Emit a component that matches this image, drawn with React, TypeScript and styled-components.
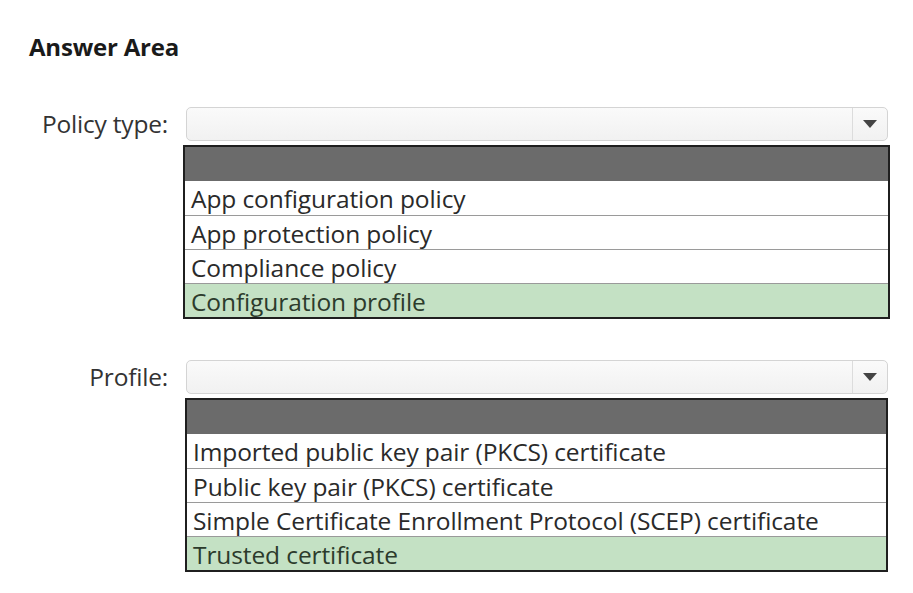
import * as React from 'react';
import styled, { createGlobalStyle } from 'styled-components';

const GlobalStyle = createGlobalStyle`
    html, body {
        margin: 0;
        padding: 0;
        background: #ffffff;
    }
    body {
        font-family: 'Open Sans', 'Noto Sans', sans-serif;
        color: #333333;
    }
`

const Root = styled.div`
    width: 913px;
    height: 593px;
    padding-top: 31px;
    box-sizing: border-box;
`

const Title = styled.h2`
    margin: 0 0 44px 29px;
    font-size: 24px;
    font-weight: 700;
    color: #1a1a1a;
    line-height: 32px;
    letter-spacing: -0.2px;
`

const Field = styled.div`
    display: grid;
    grid-template-columns: 168px 702px;
    column-gap: 18px;
    align-items: start;
    margin-bottom: ${(props: { gapAfter: number }) => props.gapAfter}px;
`

const Label = styled.div`
    grid-column: 1;
    text-align: right;
    font-size: 24.5px;
    line-height: 34px;
    color: #333333;
    letter-spacing: -0.2px;
`

const Select = styled.div`
    grid-column: 2;
    display: flex;
    height: 34px;
    box-sizing: border-box;
    border: 1px solid #d4d4d4;
    border-radius: 5px;
    background: linear-gradient(#fafafa, #f1f1f1);
`

const SelectBody = styled.div`
    flex: 1;
`

const ArrowButton = styled.div`
    width: 34px;
    border-left: 1px solid #dcdcdc;
    display: flex;
    align-items: center;
    justify-content: center;
`

const ListBox = styled.div`
    grid-column: 2;
    margin-top: 4px;
    margin-left: ${(props: { shift: number }) => props.shift}px;
    margin-right: ${(props: { shift: number }) => props.shift + 1}px;
    border: 2px solid #1f1f1f;
    background: #ffffff;
`

const ListHeader = styled.div`
    height: 34px;
    background: #6b6b6b;
`

const Option = styled.div`
    height: 34px;
    box-sizing: border-box;
    padding: 2px 0 0 6px;
    font-size: 24.5px;
    line-height: 32px;
    letter-spacing: -0.1px;
    white-space: nowrap;
    color: ${(props: { selected?: boolean }) => props.selected ? '#2c3b2c' : '#2a2a2a'};
    background: ${(props: { selected?: boolean }) => props.selected ? '#c4e1c4' : '#ffffff'};
    border-top: 1px solid #9a9a9a;

    &:first-of-type {
        border-top: none;
    }
`

const Arrow = () => (
    <svg width="14" height="8" viewBox="0 0 14 8">
        <path d="M0 0 L14 0 L7 8 Z" fill="#444444" />
    </svg>
)

type DropdownProps = {
    label: string,
    options: Array<string>,
    selected: number,
    gapAfter: number,
    shift: number,
}

const Dropdown = ({ label, options, selected, gapAfter, shift }: DropdownProps) => (
    <Field gapAfter={gapAfter}>
        <Label>{label}</Label>
        <Select>
            <SelectBody />
            <ArrowButton><Arrow /></ArrowButton>
        </Select>
        <div />
        <ListBox shift={shift}>
            <ListHeader />
            <div>
                {options.map((o, i) => (
                    <Option key={o} selected={i === selected}>{o}</Option>
                ))}
            </div>
        </ListBox>
    </Field>
)

export default function App() {
    return (
        <Root>
            <GlobalStyle />
            <Title>Answer Area</Title>
            <Dropdown
                label="Policy type:"
                selected={3}
                gapAfter={41}
                shift={-3}
                options={[
                    'App configuration policy',
                    'App protection policy',
                    'Compliance policy',
                    'Configuration profile',
                ]}
            />
            <Dropdown
                label="Profile:"
                selected={3}
                gapAfter={0}
                shift={-1}
                options={[
                    'Imported public key pair (PKCS) certificate',
                    'Public key pair (PKCS) certificate',
                    'Simple Certificate Enrollment Protocol (SCEP) certificate',
                    'Trusted certificate',
                ]}
            />
        </Root>
    )
}
